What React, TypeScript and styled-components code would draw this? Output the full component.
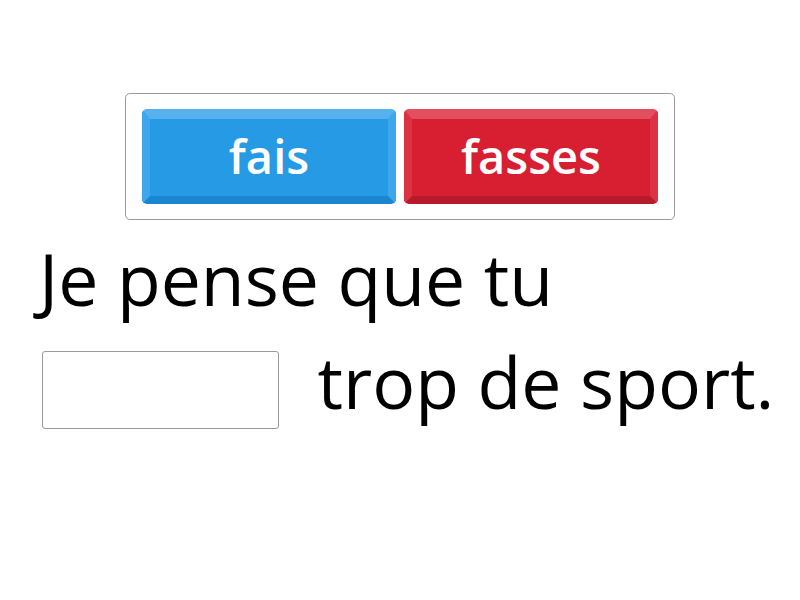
import styled, { createGlobalStyle } from "styled-components";

const GlobalStyle = createGlobalStyle`
  body {
    margin: 0;
    background: #ffffff;
    font-family: "Open Sans", "Liberation Sans", sans-serif;
  }
`;

const Page = styled.main`
  width: 800px;
  height: 600px;
  padding-top: 93px;
  box-sizing: border-box;
  display: flex;
  flex-direction: column;
  align-items: center;
`;

const Choices = styled.div`
  width: 550px;
  height: 127px;
  box-sizing: border-box;
  border: 1px solid #9a9a9a;
  border-radius: 5px;
  padding: 15px 16px;
  display: grid;
  grid-template-columns: 1fr 1fr;
  gap: 8px;
`;

const palette = {
  blue: { main: "#279ae6", top: "#56b1ee", side: "#3ea6ea", bottom: "#1a86d2" },
  red: { main: "#d81e31", top: "#e2505f", side: "#dc3344", bottom: "#b71a2b" },
};

const Tile = styled.div<{ $tone: "blue" | "red" }>`
  display: flex;
  justify-content: center;
  align-items: center;
  box-sizing: border-box;
  height: 95px;
  border-radius: 5px;
  border-style: solid;
  border-width: 10px 8px 8px 8px;
  border-top-color: ${p => palette[p.$tone].top};
  border-left-color: ${p => palette[p.$tone].side};
  border-right-color: ${p => palette[p.$tone].side};
  border-bottom-color: ${p => palette[p.$tone].bottom};
  background: ${p => palette[p.$tone].main};
  color: #ffffff;
  font-size: 47px;
  font-weight: 600;
  padding-bottom: 4px;
`;

const Sentence = styled.p`
  width: 800px;
  box-sizing: border-box;
  margin: 7px 0 0;
  padding-left: 39px;
  font-size: 71.5px;
  line-height: 103px;
  color: #000000;
`;

const Blank = styled.span`
  display: inline-block;
  width: 237px;
  height: 78px;
  box-sizing: border-box;
  border: 1px solid #9a9a9a;
  border-radius: 3px;
  vertical-align: middle;
  margin: 0 20px 0 3px;
`;

function App() {
  return (
    <>
      <GlobalStyle />
      <Page>
        <Choices>
          <Tile $tone="blue">fais</Tile>
          <Tile $tone="red">fasses</Tile>
        </Choices>
        <Sentence>
          Je pense que tu <Blank /> trop de sport.
        </Sentence>
      </Page>
    </>
  );
}

export default App;
